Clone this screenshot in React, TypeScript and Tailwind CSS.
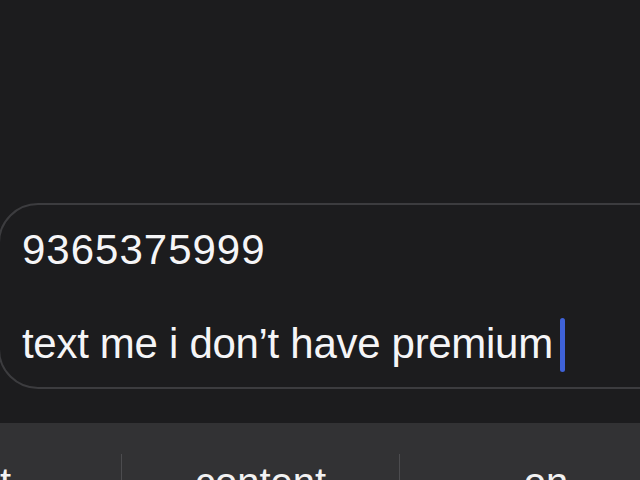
export default function App() {
  return (
    <div
      className="h-screen w-full overflow-hidden bg-[#1c1c1e] flex flex-col text-[#f5f5f7]"
      style={{ fontFamily: '"Liberation Sans", Arial, sans-serif' }}
    >
      <div className="mt-[203px] ml-[-2px] w-[720px] rounded-[40px] border-2 border-[#3c3c3f] pl-[22px] pt-[21px] pb-[20px] text-[42px] leading-[47px]">
        <div className="tracking-[1px]">9365375999</div>
        <div className="h-[47px]" />
        <div className="flex items-center h-[47px]">
          <span className="tracking-[-0.3px] whitespace-nowrap">text me i don’t have premium</span>
          <span className="ml-[7px] mt-[3px] h-[54px] w-[5px] rounded-full bg-[#3f62d8] shrink-0" />
        </div>
      </div>

      <div className="mt-[34px] flex-1 bg-[#323234] flex items-start text-[40px] leading-normal text-[#f2f2f2]">
        <div className="ml-[-163px] w-[284px] shrink-0 flex justify-center pt-[29px]">text</div>
        <div className="mt-[31px] h-[56px] w-px bg-[#4c4c4f] shrink-0" />
        <div className="w-[277px] shrink-0 flex justify-center pt-[29px]">content</div>
        <div className="mt-[31px] h-[56px] w-px bg-[#4c4c4f] shrink-0" />
        <div className="w-[292px] shrink-0 flex justify-center pt-[29px]">on</div>
      </div>
    </div>
  );
}
